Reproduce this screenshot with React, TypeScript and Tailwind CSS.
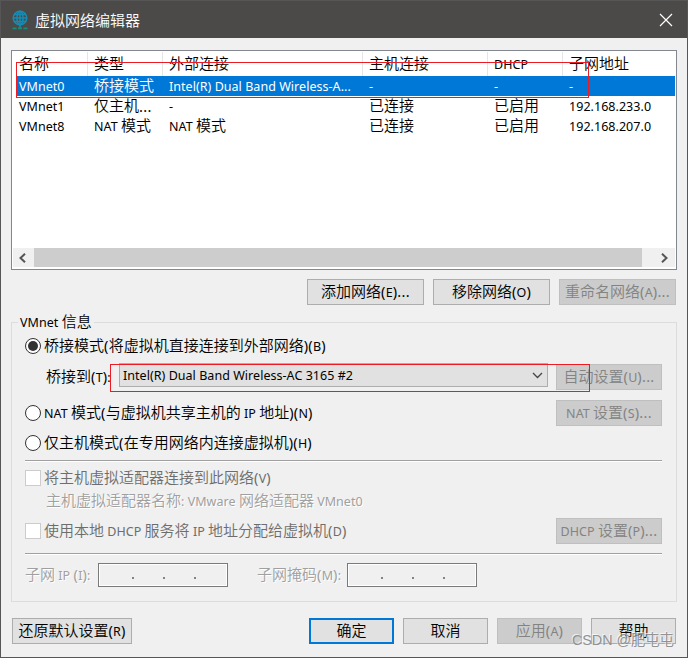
import React from "react";

const LATIN = "font-['Noto_Sans','Open_Sans',sans-serif] text-[12.5px] tracking-[0.04px]";
const WIDE = "font-['Noto_Sans','Open_Sans',sans-serif] text-[14.5px] tracking-[0.3px]";
const CJK = "font-['Noto_Sans_CJK_SC',sans-serif] text-[15px] font-[350]";

function T({ children, raised = false }: { children: string; raised?: boolean }) {
  const mixed = /[\u4e00-\u9fff]/.test(children);
  const runs = mixed
    ? (children.match(/[\u4e00-\u9fff]+|[().]+|[^\u4e00-\u9fff().]+/g) ?? [])
    : [children];
  return (
    <span className="leading-5 whitespace-pre">
      {runs.map((run, i) => {
        const cjk = /[\u4e00-\u9fff]/.test(run);
        const font = cjk ? CJK : mixed && /[().]/.test(run) ? WIDE : LATIN;
        return (
          <span key={i} className={`${font} ${cjk && raised ? "relative -top-px" : ""}`}>
            {run}
          </span>
        );
      })}
    </span>
  );
}

function Button({
  label,
  className,
  disabled = false,
  primary = false,
}: {
  label: string;
  className: string;
  disabled?: boolean;
  primary?: boolean;
}) {
  const look = disabled
    ? "border border-[#bfbfbf] bg-[#cccccc] text-[#838383]"
    : primary
      ? "border-2 border-[#0078d7] bg-[#e1e1e1] text-black"
      : "border border-[#adadad] bg-[#e1e1e1] text-black";
  return (
    <button className={`flex h-[26px] shrink-0 items-center justify-center ${look} ${className}`}>
      <T raised={!/[(]/.test(label)}>{label}</T>
    </button>
  );
}

function Radio({ label, checked = false }: { label: string; checked?: boolean }) {
  return (
    <label className="flex h-5 items-center gap-[3px] text-black">
      <span className="flex size-4 items-center justify-center rounded-full border border-[#333] bg-white">
        {checked && <span className="size-[10px] rounded-full bg-[#333]" />}
      </span>
      <T>{label}</T>
    </label>
  );
}

function Check({ label }: { label: string }) {
  return (
    <label className="flex h-5 items-center gap-[3px] text-[#6d6d6d]">
      <span className="size-4 border border-[#cccccc] bg-white" />
      <T>{label}</T>
    </label>
  );
}

function IpBox() {
  return (
    <div className="flex h-6 w-[130px] shrink-0 border border-[#7a7a7a] bg-[#f0f0f0] pl-[33px] ring-1 ring-white ring-inset">
      {[0, 1, 2].map((i) => (
        <span key={i} className="mt-[13px] mr-[29px] size-[2px] bg-[#838383]" />
      ))}
    </div>
  );
}

function Divider() {
  return <div className="h-[2px] w-[637px] border-b border-white bg-[#a0a0a0]" />;
}

const COLS = "grid grid-cols-[75px_75px_200px_125px_75px_1fr]";
const rows = [
  ["VMnet0", "桥接模式", "Intel(R) Dual Band Wireless-A...", "-", "-", "-"],
  ["VMnet1", "仅主机...", "-", "已连接", "已启用", "192.168.233.0"],
  ["VMnet8", "NAT 模式", "NAT 模式", "已连接", "已启用", "192.168.207.0"],
];

export default function App() {
  return (
    <div className="relative flex h-[658px] w-[688px] flex-col overflow-hidden border border-[#575656] bg-[#f0f0f0]">
      <header className="flex h-[37px] shrink-0 items-center bg-[#4c4a48] pl-[10px] text-white">
        <svg width="18" height="20" viewBox="0 0 18 20" fill="none" stroke="#168cb5" strokeWidth="1.5">
          <circle cx="9" cy="8" r="6.8" />
          <ellipse cx="9" cy="8" rx="3.1" ry="6.8" />
          <path d="M9 1v17M2.3 8h13.4M3.5 4.5h11M3.5 11.5h11" />
          <path d="M1.5 18.4h4M7 18.4h4M12.5 18.4h4" stroke="#168d78" strokeWidth="1.6" />
        </svg>
        <span className="ml-[6px] font-['Noto_Sans_CJK_SC',sans-serif] text-[15px] leading-5 font-[350]">虚拟网络编辑器</span>
        <svg className="mr-[14px] ml-auto" width="14" height="14" viewBox="0 0 14 14" stroke="white" strokeWidth="1.2">
          <path d="M1 1l12 12M13 1L1 13" />
        </svg>
      </header>

      <main className="flex flex-col pt-[12px] pl-[10px]">
        <section className="flex h-[220px] w-[666px] flex-col border border-[#828790] bg-white pl-px">
          <div className={`${COLS} h-[25px] shrink-0 pt-px`}>
            {["名称", "类型", "外部连接", "主机连接", "DHCP", "子网地址"].map((h, i) => (
              <div key={h} className={`flex h-6 items-center pl-[6px] ${i < 5 ? "border-r border-[#e5e5e5]" : ""}`}>
                <T raised>{h}</T>
              </div>
            ))}
          </div>
          {rows.map((r, n) => (
            <div
              key={r[0]}
              className={`${COLS} mr-px ml-[3px] h-5 shrink-0 ${n === 0 ? "bg-[#0078d7] text-white" : "text-black"}`}
            >
              {r.map((c, i) => (
                <div key={i} className="-ml-[3px] flex h-5 items-center pl-[6px]">
                  <T raised={!c.startsWith("NAT")}>{c}</T>
                </div>
              ))}
            </div>
          ))}
          <div className="mt-auto mr-px mb-[2px] flex h-[19px] shrink-0 items-center bg-[#f0f0f0]">
            <svg className="ml-[5px]" width="9" height="10" viewBox="0 0 9 10" fill="none" stroke="#555" strokeWidth="2">
              <path d="M7 .8L2.5 5L7 9.2" />
            </svg>
            <div className="ml-[7px] h-[19px] w-[608px] bg-[#cdcdcd]" />
            <svg className="ml-[18px]" width="9" height="10" viewBox="0 0 9 10" fill="none" stroke="#555" strokeWidth="2">
              <path d="M2 .8L6.5 5L2 9.2" />
            </svg>
          </div>
        </section>

        <div className="mt-[9px] flex gap-[9px] pl-[296px]">
          <Button label="添加网络(E)..." className="w-[117px]" />
          <Button label="移除网络(O)" className="w-[117px]" />
          <Button label="重命名网络(A)..." className="w-[117px]" disabled />
        </div>

        <fieldset className="mt-[7px] h-[290px] w-[666px] border border-[#dcdcdc] pl-[13px]">
          <legend className="-ml-[7px] flex h-5 items-center px-[2px] text-black">
            <T>VMnet 信息</T>
          </legend>
          <div className="mt-[4px]">
            <Radio label="桥接模式(将虚拟机直接连接到外部网络)(B)" checked />
            <div className="mt-[7px] flex h-[27px] items-start pl-[21px]">
              <div className="flex h-[27px] w-[73px] items-center">
                <T>桥接到(T):</T>
              </div>
              <div className="flex h-6 w-[429px] items-center border border-[#adadad] bg-[#e1e1e1] pl-[3px] text-black">
                <T>Intel(R) Dual Band Wireless-AC 3165 #2</T>
                <svg className="mr-[4px] ml-auto" width="11" height="7" viewBox="0 0 11 7" fill="none" stroke="#444" strokeWidth="1.3">
                  <path d="M1 1l4.5 4.5L10 1" />
                </svg>
              </div>
              <Button label="自动设置(U)..." className="mt-px ml-[8px] w-[106px]" disabled />
            </div>
            <div className="mt-[10px] flex h-[26px] w-[637px] items-center justify-between">
              <Radio label="NAT 模式(与虚拟机共享主机的 IP 地址)(N)" />
              <Button label="NAT 设置(S)..." className="w-[106px]" disabled />
            </div>
            <div className="mt-[7px]">
              <Radio label="仅主机模式(在专用网络内连接虚拟机)(H)" />
            </div>
          </div>
          <div className="mt-[7px]">
            <Divider />
            <div className="mt-[6px]">
              <Check label="将主机虚拟适配器连接到此网络(V)" />
            </div>
            <div className="mt-[3px] flex h-5 items-center pl-[21px] text-[#a0a0a0] [text-shadow:1px_1px_0_#fff]">
              <T>主机虚拟适配器名称: VMware 网络适配器 VMnet0</T>
            </div>
            <div className="mt-[7px] flex h-[26px] w-[637px] items-center justify-between">
              <Check label="使用本地 DHCP 服务将 IP 地址分配给虚拟机(D)" />
              <Button label="DHCP 设置(P)..." className="w-[106px]" disabled />
            </div>
            <div className="mt-[9px]">
              <Divider />
            </div>
            <div className="mt-[8px] flex items-center text-[#a0a0a0] [text-shadow:1px_1px_0_#fff]">
              <span className="flex w-[73px]"><T>子网 IP (I):</T></span>
              <IpBox />
              <span className="ml-[29px] flex w-[90px]"><T>子网掩码(M):</T></span>
              <IpBox />
            </div>
          </div>
        </fieldset>

        <footer className="mt-[16px] flex gap-[9px] pl-px">
          <Button label="还原默认设置(R)" className="mr-[168px] w-[120px]" />
          <Button label="确定" className="w-[85px]" primary />
          <Button label="取消" className="w-[85px]" />
          <Button label="应用(A)" className="w-[85px]" disabled />
          <Button label="帮助" className="w-[85px]" />
        </footer>
      </main>

      <div className="pointer-events-none absolute top-[61px] left-[15px] h-[36px] w-[573px] border border-[#ed1c24]" />
      <div className="pointer-events-none absolute top-[363px] left-[109px] h-[28px] w-[480px] border border-[#ed1c24]" />
      <div className="pointer-events-none absolute top-[629px] left-[571px] font-['Liberation_Sans','Noto_Sans_CJK_SC',sans-serif] text-[14.3px] leading-5 whitespace-nowrap text-[#929292] [text-shadow:-1px_-1px_0_rgba(255,255,255,.7)]">
        CSDN @肥屯屯
      </div>
    </div>
  );
}
